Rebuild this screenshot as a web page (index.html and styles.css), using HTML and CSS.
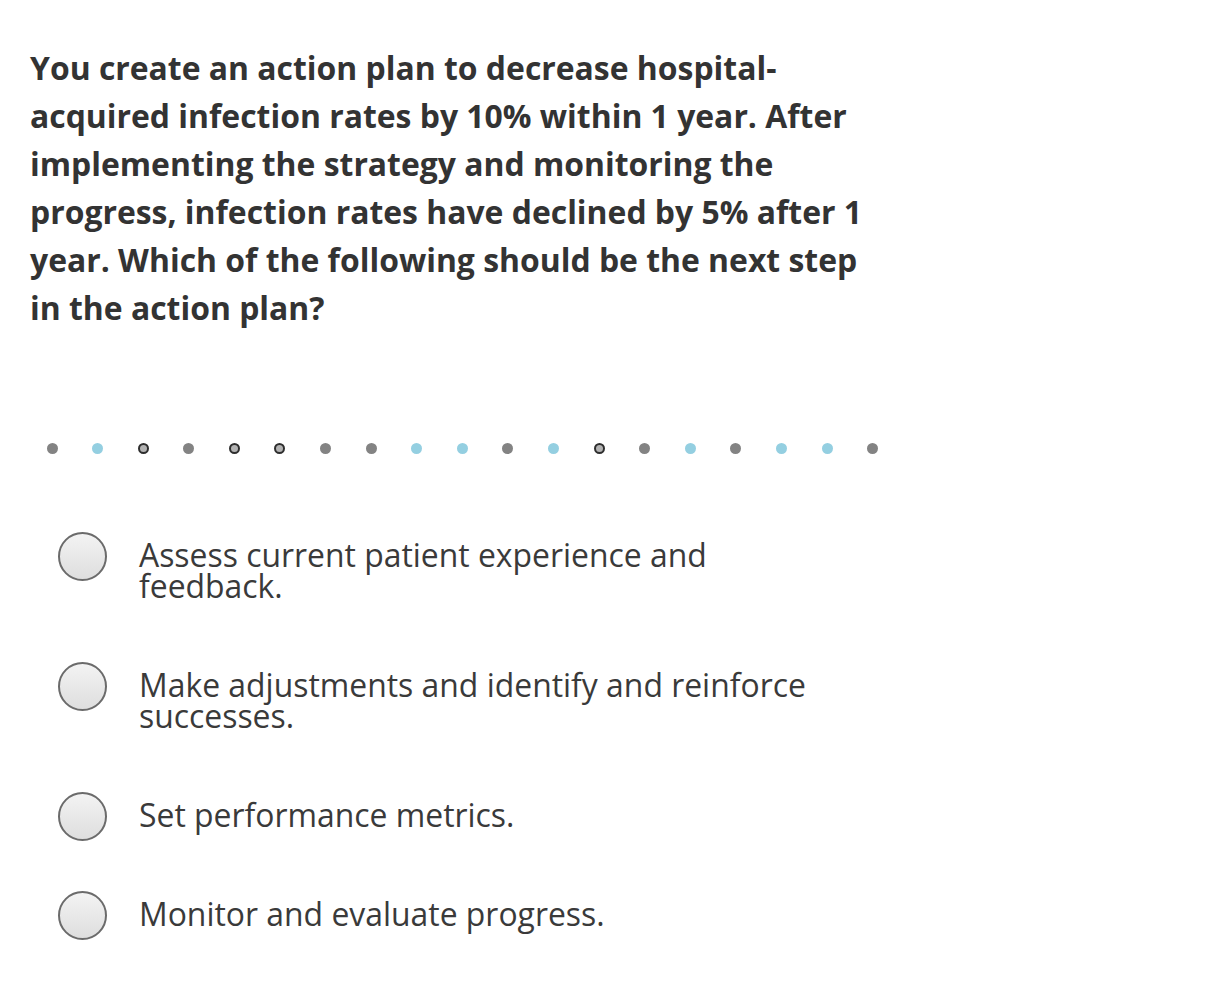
FILE: index.html
```html
<!DOCTYPE html>
<html lang="en">
<head>
<meta charset="utf-8">
<title>Question</title>
<link rel="stylesheet" href="styles.css">
</head>
<body>
<div class="page">
  <p class="question">You create an action plan to decrease hospital-acquired infection rates by 10% within 1 year. After implementing the strategy and monitoring the progress, infection rates have declined by 5% after 1 year. Which of the following should be the next step in the action plan?</p>

  <div class="dots">
    <span class="dot grey"></span>
    <span class="dot blue"></span>
    <span class="dot ring"></span>
    <span class="dot grey"></span>
    <span class="dot ring"></span>
    <span class="dot ring"></span>
    <span class="dot grey"></span>
    <span class="dot grey"></span>
    <span class="dot blue"></span>
    <span class="dot blue"></span>
    <span class="dot grey"></span>
    <span class="dot blue"></span>
    <span class="dot ring"></span>
    <span class="dot grey"></span>
    <span class="dot blue"></span>
    <span class="dot grey"></span>
    <span class="dot blue"></span>
    <span class="dot blue"></span>
    <span class="dot grey"></span>
  </div>

  <div class="options">
    <div class="option">
      <span class="radio"></span>
      <span class="label">Assess current patient experience and feedback.</span>
    </div>
    <div class="option">
      <span class="radio"></span>
      <span class="label">Make adjustments and identify and reinforce successes.</span>
    </div>
    <div class="option">
      <span class="radio"></span>
      <span class="label">Set performance metrics.</span>
    </div>
    <div class="option">
      <span class="radio"></span>
      <span class="label">Monitor and evaluate progress.</span>
    </div>
  </div>
</div>
</body>
</html>
```
FILE: styles.css
```css
html, body {
  margin: 0;
  padding: 0;
  background: #ffffff;
}

.page {
  padding: 44px 0 0 30px;
  font-family: "Open Sans", "Noto Sans", sans-serif;
  color: #333333;
}

.question {
  margin: 0;
  width: 845px;
  font-size: 31.9px;
  font-weight: 700;
  line-height: 48px;
  color: #333333;
}

.dots {
  display: flex;
  gap: 34.6px;
  margin-top: 111px;
  padding-left: 16.5px;
}

.dot {
  width: 11px;
  height: 11px;
  border-radius: 50%;
  box-sizing: border-box;
  flex: none;
}

.dot.grey {
  background: #838383;
}

.dot.blue {
  background: #94cfe1;
}

.dot.ring {
  background: #b3b3b3;
  border: 2.5px solid #2e2e2e;
}

.options {
  margin-top: 85px;
  padding-left: 28px;
}

.option {
  display: flex;
  align-items: flex-start;
  margin-bottom: 68px;
}

.radio {
  flex: none;
  width: 49px;
  height: 49px;
  box-sizing: border-box;
  border-radius: 50%;
  border: 2px solid #6b6b6b;
  background: linear-gradient(#f3f3f3, #dedede);
  margin-top: -7px;
  margin-bottom: -20px;
  margin-right: 32px;
}

.label {
  width: 690px;
  font-size: 31.9px;
  line-height: 31px;
  color: #3a3a3a;
}
```
